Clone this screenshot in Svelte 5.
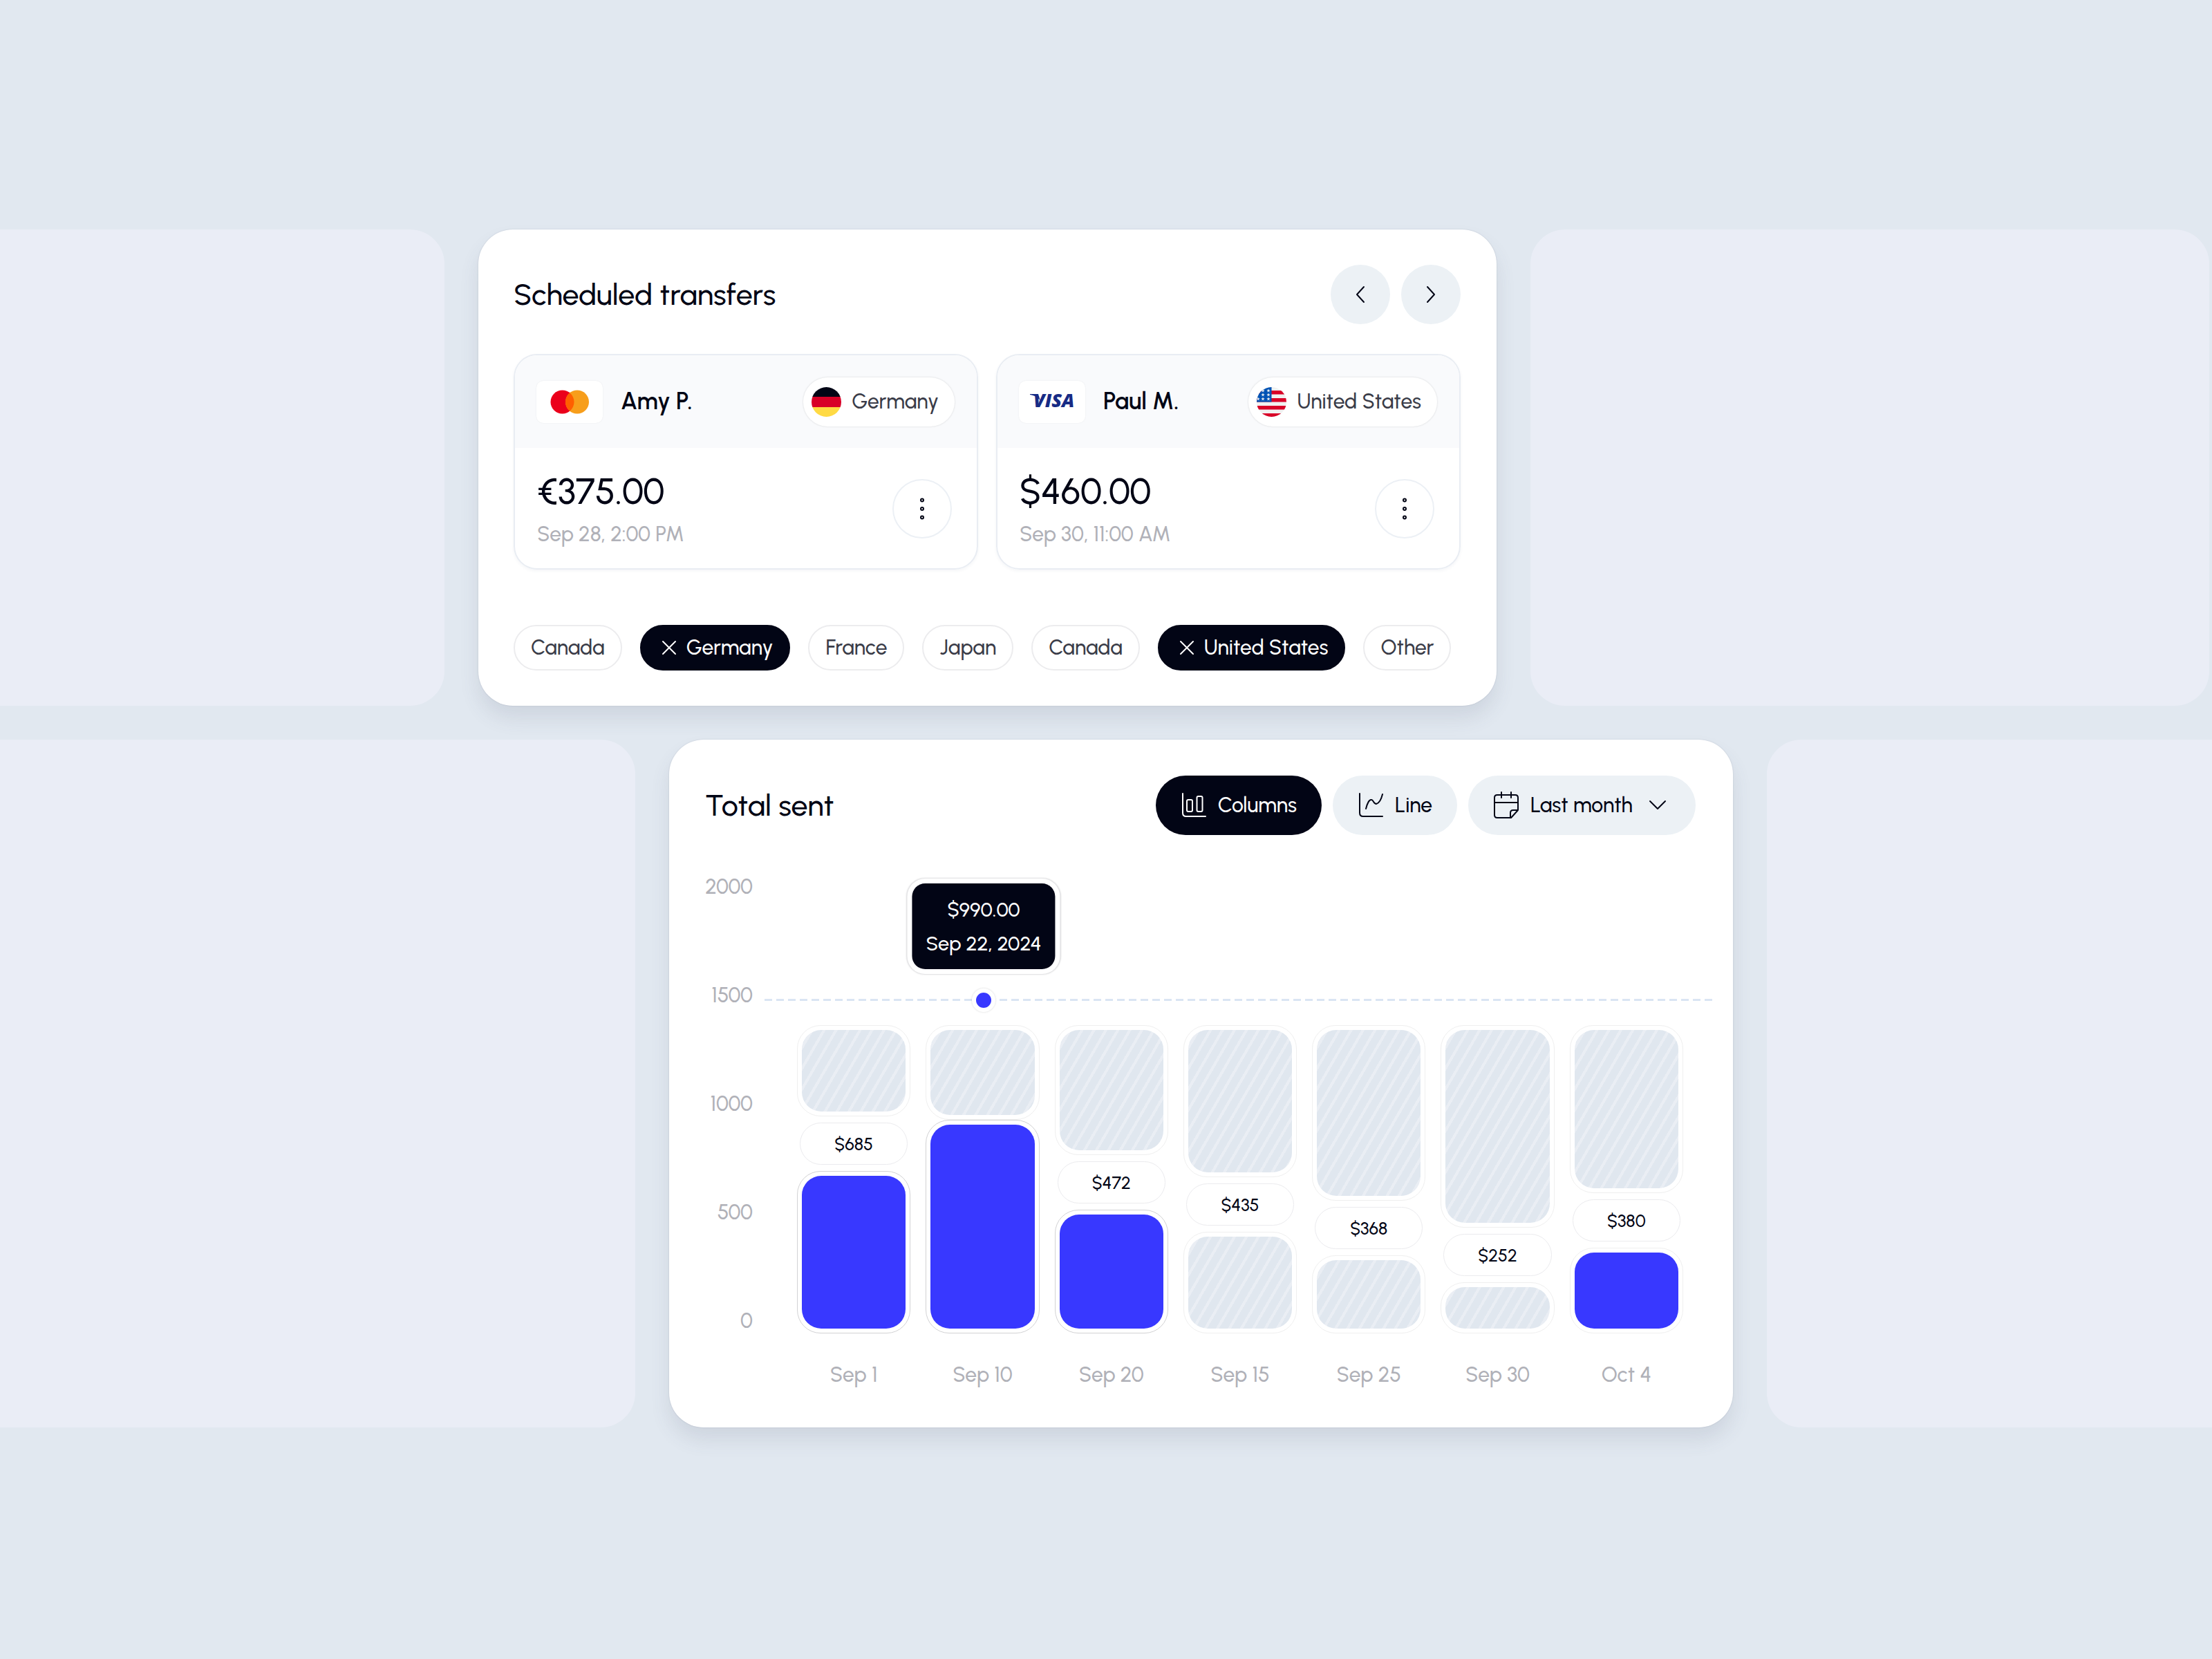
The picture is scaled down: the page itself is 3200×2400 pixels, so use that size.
<script lang="ts">
  type Transfer = {
    name: string;
    network: 'mastercard' | 'visa';
    country: string;
    flag: 'de' | 'us';
    amount: string;
    date: string;
  };

  type Bar = {
    date: string;
    value: number;
    height: number;
    filled: boolean;
    soft?: boolean;
    tooltip?: { amount: string; date: string };
  };

  const transfers: Transfer[] = [
    { name: 'Amy P.', network: 'mastercard', country: 'Germany', flag: 'de', amount: '€375.00', date: 'Sep 28, 2:00 PM' },
    { name: 'Paul M.', network: 'visa', country: 'United States', flag: 'us', amount: '$460.00', date: 'Sep 30, 11:00 AM' }
  ];

  let filters = $state([
    { label: 'Canada', active: false },
    { label: 'Germany', active: true },
    { label: 'France', active: false },
    { label: 'Japan', active: false },
    { label: 'Canada', active: false },
    { label: 'United States', active: true },
    { label: 'Other', active: false }
  ]);

  const ticks = [2000, 1500, 1000, 500, 0];

  // height is the share of the column taken by the lower block, in px
  const bars: Bar[] = [
    { date: 'Sep 1', value: 685, height: 235, filled: true },
    { date: 'Sep 10', value: 990, height: 309, filled: true, tooltip: { amount: '$990.00', date: 'Sep 22, 2024' } },
    { date: 'Sep 20', value: 472, height: 179, filled: true },
    { date: 'Sep 15', value: 435, height: 147, filled: false },
    { date: 'Sep 25', value: 368, height: 113, filled: false },
    { date: 'Sep 30', value: 252, height: 74, filled: false },
    { date: 'Oct 4', value: 380, height: 124, filled: true, soft: true }
  ];

  const stars = [[9, 5], [17, 5], [9, 11], [17, 11], [2, 17], [9, 17], [17, 17]];

  let view = $state('columns');
  let period = $state('Last month');
</script>

<main class="page">
  <div class="row row-top">
    <div class="ghost ghost-left"></div>

    <section class="card transfers">
      <header class="card-head">
        <h2>Scheduled transfers</h2>
        <div class="nav">
          <button class="round" aria-label="Previous">
            <svg width="16" height="26" viewBox="0 0 16 26"><path d="M13 2 3 13l10 11" /></svg>
          </button>
          <button class="round" aria-label="Next">
            <svg width="16" height="26" viewBox="0 0 16 26"><path d="M3 2l10 11L3 24" /></svg>
          </button>
        </div>
      </header>

      <div class="transfer-list">
        {#each transfers as t}
          <article class="transfer">
            <div class="transfer-head">
              <span class="network">
                {#if t.network === 'mastercard'}
                  <svg width="57" height="35" viewBox="0 0 57 35" role="img" aria-label="Mastercard">
                    <circle cx="17.5" cy="17.5" r="17" fill="#eb001b" />
                    <circle cx="39" cy="17.5" r="17" fill="#f79e1b" />
                    <path d="M28.25 4.3a17 17 0 0 1 0 26.4 17 17 0 0 1 0-26.4z" fill="#ff5f00" />
                  </svg>
                {:else}
                  <svg class="visa" width="84" height="56" viewBox="0 0 84 56">
                    <path d="M10 17h9c2 0 3 1 4 3l2 7C22 22 17 19 10 18z" fill="#172b85" />
                    <text x="15" y="36">VISA</text>
                  </svg>
                {/if}
              </span>
              <h3>{t.name}</h3>
              <span class="country">
                <svg class="flag" width="43" height="43" viewBox="0 0 43 43">
                  {#if t.flag === 'de'}
                    <path d="M0 0h43v14H0z" fill="#020515" />
                    <path d="M0 14h43v15H0z" fill="#d80027" />
                    <path d="M0 29h43v14H0z" fill="#ffda44" />
                  {:else}
                    <path d="M0 0h43v43H0z" fill="#f0f0f0" />
                    <path d="M0 5h43v5.5H0zM0 16h43v5.5H0zM0 27h43v5.5H0zM0 38h43v5H0z" fill="#d80027" />
                    <path d="M0 0h21.5v21.5H0z" fill="#0052b4" />
                    {#each stars as [x, y]}
                      <path
                        transform="translate({x} {y})"
                        d="M0-2.8.7-.8h2L1.1.4l.6 2L0 1.2l-1.7 1.2.6-2L-2.7-.8h2z"
                        fill="#f0f0f0"
                      />
                    {/each}
                  {/if}
                </svg>
                {t.country}
              </span>
            </div>
            <div class="transfer-body">
              <div>
                <p class="amount">{t.amount}</p>
                <p class="date">{t.date}</p>
              </div>
              <button class="round outline" aria-label="More options">
                <svg width="10" height="34" viewBox="0 0 10 34">
                  <circle cx="5" cy="4.5" r="2" />
                  <circle cx="5" cy="17" r="2" />
                  <circle cx="5" cy="29.5" r="2" />
                </svg>
              </button>
            </div>
          </article>
        {/each}
      </div>

      <div class="filters">
        {#each filters as f}
          <button class="chip" class:active={f.active} aria-pressed={f.active} onclick={() => (f.active = !f.active)}>
            {#if f.active}
              <svg width="22" height="22" viewBox="0 0 22 22"><path d="M2 2l18 18M20 2 2 20" /></svg>
            {/if}
            {f.label}
          </button>
        {/each}
      </div>
    </section>

    <div class="ghost ghost-right"></div>
  </div>

  <div class="row row-bottom">
    <div class="ghost ghost-left"></div>

    <section class="card total">
      <header class="card-head">
        <h2>Total sent</h2>
        <div class="nav">
          <button class="pill" class:active={view === 'columns'} aria-pressed={view === 'columns'} onclick={() => (view = 'columns')}>
            <svg width="36" height="40" viewBox="0 0 36 40">
              <path d="M2 3v28q0 5 5 5h28" />
              <rect x="8" y="12" width="8" height="17" rx="2" />
              <rect x="22.5" y="7" width="8" height="22" rx="2" />
            </svg>
            Columns
          </button>
          <button class="pill" class:active={view === 'line'} aria-pressed={view === 'line'} onclick={() => (view = 'line')}>
            <svg width="36" height="40" viewBox="0 0 36 40">
              <path d="M2 3v28q0 5 5 5h28" />
              <path d="M11 25c2-8 5-14 8-13 3 0 3 6 7 6 4-1 7-6 9-14" />
            </svg>
            Line
          </button>
          <label class="pill">
            <svg width="36" height="40" viewBox="0 0 36 40">
              <path d="M5 5h26q4 0 4 4v18L25 38H5q-4 0-4-4V9q0-4 4-4zM1 16h34M11 1v8M25 1v8M24 38v-7q0-4 4-4h7" />
            </svg>
            <select bind:value={period} aria-label="Period">
              <option>Last month</option>
            </select>
            <svg class="chevron" width="26" height="16" viewBox="0 0 26 16"><path d="M2 2l11 11L24 2" /></svg>
          </label>
        </div>
      </header>

      <div class="chart">
        <div class="axis">
          {#each ticks as tick}
            <span>{tick}</span>
          {/each}
        </div>
        <div class="plot">
          <div class="guide"></div>
          {#each bars as bar}
            <div class="column" class:peak={bar.tooltip}>
              <div class="block hatch"></div>
              {#if bar.tooltip}
                <div class="tooltip">
                  <span>{bar.tooltip.amount}</span>
                  <span>{bar.tooltip.date}</span>
                </div>
                <div class="marker"></div>
              {:else}
                <span class="value">${bar.value}</span>
              {/if}
              <div
                class="block lower"
                class:hatch={!bar.filled}
                class:soft={bar.soft}
                style="height: {bar.height}px"
              ></div>
            </div>
          {/each}
        </div>
        <div class="dates">
          {#each bars as bar}
            <span>{bar.date}</span>
          {/each}
        </div>
      </div>
    </section>

    <div class="ghost ghost-right"></div>
  </div>
</main>

<style>
  :global(body) {
    background: #e1e8f0;
  }

  .page {
    --ink: #020515;
    --muted: #b0b1b8;
    --soft: #ecf1f5;
    --blue: #3838ff;
    box-sizing: border-box;
    min-height: 100vh;
    padding: 332px 0;
    display: flex;
    flex-direction: column;
    gap: 49px;
    overflow: hidden;
    font-family: Urbanist, Lato, sans-serif;
    font-size: 30px;
    font-weight: 500;
    line-height: 36px;
    color: var(--ink);
  }

  .page :global(*) {
    box-sizing: border-box;
  }

  h2,
  h3,
  p {
    margin: 0;
  }

  button,
  select {
    font: inherit;
    color: inherit;
    border: 0;
    background: none;
    padding: 0;
    cursor: pointer;
  }

  svg {
    flex: none;
    fill: none;
    stroke-linecap: round;
    stroke-linejoin: round;
  }

  button svg,
  label svg {
    stroke: currentColor;
    stroke-width: 2;
  }

  .row {
    display: grid;
    gap: 49px;
  }

  .row-top {
    grid-template-columns: 643fr 1473fr 982fr;
    padding-right: 4px;
  }

  .row-bottom {
    grid-template-columns: 919fr 1539fr 644fr;
  }

  .ghost {
    background: #eaedf6;
    border-radius: 50px;
  }

  .ghost-left {
    border-top-left-radius: 0;
    border-bottom-left-radius: 0;
  }

  .row-bottom .ghost-right {
    border-top-right-radius: 0;
    border-bottom-right-radius: 0;
  }

  .card {
    background: #fff;
    border-radius: 50px;
    padding: 51px 52px 51px 51px;
    box-shadow:
      0 0 2px rgba(20, 30, 60, 0.16),
      0 18px 28px rgba(70, 80, 110, 0.12);
  }

  .card-head {
    display: flex;
    align-items: center;
    justify-content: space-between;
  }

  h2 {
    font-size: 43px;
    line-height: 52px;
    font-weight: 500;
  }

  .nav {
    display: flex;
    gap: 16px;
  }

  .round {
    width: 86px;
    height: 86px;
    border-radius: 50%;
    background: var(--soft);
    display: flex;
    align-items: center;
    justify-content: center;
  }

  .round.outline {
    background: #fff;
    border: 2px solid #ecf0f5;
  }

  .transfer-list {
    display: grid;
    grid-template-columns: 1fr 1fr;
    gap: 26px;
    margin: 43px 0 80px;
  }

  .transfer {
    border: 2px solid #e9edf3;
    border-radius: 34px;
    overflow: hidden;
    box-shadow: 0 2px 4px rgba(70, 90, 120, 0.06);
  }

  .transfer-head {
    display: flex;
    align-items: center;
    height: 134px;
    padding: 0 32px 0 31px;
    background: #f9fafc;
  }

  .network {
    width: 96px;
    height: 61px;
    border-radius: 10px;
    background: #fff;
    box-shadow: 0 0 2px rgba(2, 5, 21, 0.08);
    display: flex;
    align-items: center;
    justify-content: center;
  }

  .visa text {
    font-family: 'Open Sans', sans-serif;
    font-size: 27px;
    font-weight: 800;
    font-style: italic;
    fill: #172b85;
  }

  h3 {
    flex: 1;
    margin-left: 26px;
    font-size: 34px;
    line-height: 40px;
    font-weight: 600;
  }

  .country {
    display: flex;
    align-items: center;
    gap: 15px;
    height: 71px;
    padding: 0 23px 0 12px;
    border-radius: 36px;
    background: #fff;
    box-shadow: 0 0 2px 1px rgba(2, 5, 21, 0.07);
    color: #3a3c48;
  }

  .flag {
    border-radius: 50%;
  }

  .transfer-body {
    display: flex;
    align-items: center;
    justify-content: space-between;
    height: 174px;
    padding: 2px 36px 0 32px;
  }

  .amount {
    font-size: 52px;
    line-height: 60px;
  }

  .date {
    margin-top: 14px;
    color: var(--muted);
  }

  .filters {
    display: flex;
    gap: 26px;
  }

  .chip {
    display: flex;
    align-items: center;
    gap: 14px;
    height: 66px;
    padding: 0 23px;
    border: 2px solid #ececee;
    border-radius: 33px;
    color: #3a3c48;
    white-space: nowrap;
  }

  .chip.active {
    padding-left: 29px;
    background: var(--ink);
    border-color: var(--ink);
    color: #fff;
  }

  .total {
    padding: 52px 54px 58px 52px;
  }

  .pill {
    display: flex;
    align-items: center;
    gap: 17px;
    height: 86px;
    padding: 0 36px 0 37px;
    border-radius: 43px;
    background: var(--soft);
    white-space: nowrap;
  }

  .pill.active {
    background: var(--ink);
    color: #fff;
  }

  .pill select {
    appearance: none;
    outline: none;
  }

  .chevron {
    margin: 0 6px;
  }

  .chart {
    display: grid;
    grid-template-columns: 69px 1fr;
    column-gap: 17px;
    row-gap: 42px;
    margin-top: 57px;
  }

  .axis {
    display: flex;
    flex-direction: column;
    justify-content: space-between;
    text-align: right;
    color: var(--muted);
  }

  .plot,
  .dates {
    display: grid;
    grid-template-columns: repeat(7, 1fr);
    gap: 22px;
    padding: 0 18px 0 47px;
  }

  .plot {
    position: relative;
    padding-top: 218px;
  }

  .dates {
    grid-column: 2;
    text-align: center;
    color: var(--muted);
  }

  .guide {
    position: absolute;
    top: 180px;
    left: 0;
    right: -27px;
    height: 3px;
    background: repeating-linear-gradient(90deg, #dae5f3 0 11px, transparent 11px 17px);
  }

  .column {
    position: relative;
    height: 446px;
    display: flex;
    flex-direction: column;
    gap: 9px;
  }

  .column.peak {
    gap: 0;
  }

  .block {
    display: flex;
    border: 1px solid #efefef;
    border-radius: 34px;
    padding: 6px;
  }

  .block::before {
    content: '';
    flex: 1;
    border-radius: 28px;
    background: var(--blue);
  }

  .block.hatch {
    flex: 1;
  }

  .block.lower {
    flex: none;
    border-color: #d2d2d4;
  }

  .block.lower.hatch,
  .block.lower.soft {
    border-color: #efefef;
  }

  .block.hatch::before {
    background: repeating-linear-gradient(120deg, #e0e7ef 0 11px, #eaeef4 11px 15px);
  }

  .value {
    display: flex;
    align-items: center;
    justify-content: center;
    height: 61px;
    margin: 0 4px;
    border: 1px solid #ebebee;
    border-radius: 31px;
    font-size: 25px;
    line-height: 30px;
  }

  .tooltip {
    position: absolute;
    bottom: calc(100% + 81px);
    left: 51%;
    transform: translateX(-50%);
    display: flex;
    flex-direction: column;
    align-items: center;
    padding: 13px 20px;
    border-radius: 19px;
    background: var(--ink);
    box-shadow:
      0 0 0 7px #fff,
      0 0 2px 8px rgba(2, 5, 21, 0.14);
    color: #fff;
    font-size: 29px;
    line-height: 49px;
    white-space: nowrap;
  }

  .marker {
    position: absolute;
    bottom: calc(100% + 19px);
    left: 51%;
    transform: translateX(-50%);
    width: 34px;
    height: 34px;
    border: 6px solid #fff;
    border-radius: 50%;
    background: var(--blue);
    box-shadow: 0 0 3px rgba(2, 5, 21, 0.16);
  }
</style>
